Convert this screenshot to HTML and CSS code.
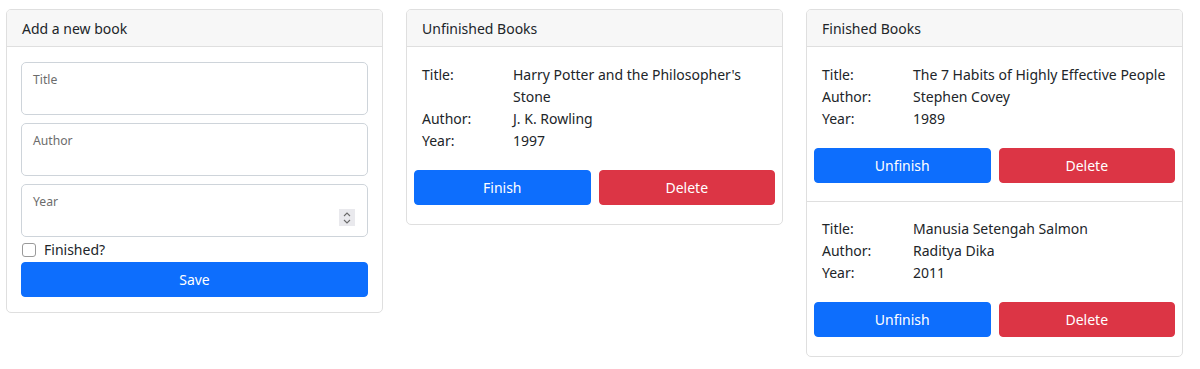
FILE: index.html
```html
<!DOCTYPE html>
<html>
<head>
<meta charset="utf-8">
<link rel="stylesheet" href="styles.css">
</head>
<body>
<div class="layout">
  <section class="card">
    <div class="card-header">Add a new book</div>
    <div class="form-body">
      <div class="field"><span class="float-label">Title</span></div>
      <div class="field"><span class="float-label">Author</span></div>
      <div class="field"><span class="float-label">Year</span>
        <span class="spinner"><svg width="10" height="14" viewBox="0 0 10 14"><path d="M2 5 L5 2 L8 5" fill="none" stroke="#6b6b6b" stroke-width="1.1"/><path d="M2 9 L5 12 L8 9" fill="none" stroke="#6b6b6b" stroke-width="1.1"/></svg></span>
      </div>
      <label class="check-row"><span class="checkbox"></span><span>Finished?</span></label>
      <button class="btn btn-primary btn-wide">Save</button>
    </div>
  </section>

  <section class="card">
    <div class="card-header">Unfinished Books</div>
    <div class="book">
      <dl class="info">
        <dt>Title:</dt><dd>Harry Potter and the Philosopher's Stone</dd>
        <dt>Author:</dt><dd>J. K. Rowling</dd>
        <dt>Year:</dt><dd>1997</dd>
      </dl>
      <div class="actions">
        <button class="btn btn-primary">Finish</button>
        <button class="btn btn-danger">Delete</button>
      </div>
    </div>
  </section>

  <section class="card">
    <div class="card-header">Finished Books</div>
    <div class="book">
      <dl class="info">
        <dt>Title:</dt><dd>The 7 Habits of Highly Effective People</dd>
        <dt>Author:</dt><dd>Stephen Covey</dd>
        <dt>Year:</dt><dd>1989</dd>
      </dl>
      <div class="actions">
        <button class="btn btn-primary">Unfinish</button>
        <button class="btn btn-danger">Delete</button>
      </div>
    </div>
    <div class="book">
      <dl class="info">
        <dt>Title:</dt><dd>Manusia Setengah Salmon</dd>
        <dt>Author:</dt><dd>Raditya Dika</dd>
        <dt>Year:</dt><dd>2011</dd>
      </dl>
      <div class="actions">
        <button class="btn btn-primary">Unfinish</button>
        <button class="btn btn-danger">Delete</button>
      </div>
    </div>
  </section>
</div>
</body>
</html>
```
FILE: styles.css
```css
* { box-sizing: border-box; }
html, body { margin: 0; background: #fff; }
body {
  font-family: "Noto Sans", "Open Sans", sans-serif;
  font-size: 14px;
  color: #212529;
  padding: 9px 0 0 6px;
}
.layout {
  display: flex;
  align-items: flex-start;
  gap: 23px;
}
.card {
  width: 377px;
  border: 1px solid #dfdfdf;
  border-radius: 5px;
  background: #fff;
  overflow: hidden;
}
.card-header {
  height: 37px;
  padding: 0 15px;
  display: flex;
  align-items: center;
  background: #f7f7f7;
  border-bottom: 1px solid #dfdfdf;
  font-size: 14px;
}
.form-body {
  padding: 15px 14px 15px 14px;
  display: flex;
  flex-direction: column;
}
.field {
  position: relative;
  height: 53px;
  border: 1px solid #ced4da;
  border-radius: 5px;
  margin-bottom: 8px;
  padding: 9px 11px;
}
.field:nth-child(3) { margin-bottom: 4px; }
.float-label {
  font-size: 12.2px;
  color: #6c6c6c;
  line-height: 16px;
  display: block;
}
.spinner {
  position: absolute;
  right: 12px;
  top: 24px;
  width: 16px;
  height: 17px;
  background: #e9e9ed;
  display: flex;
  align-items: center;
  justify-content: center;
}
.check-row {
  display: flex;
  align-items: center;
  gap: 8px;
  height: 17px;
  margin-left: 1px;
  margin-bottom: 4px;
}
.checkbox {
  width: 14px;
  height: 14px;
  border: 1px solid #9a9a9a;
  border-radius: 3px;
  background: #fff;
}
.btn {
  font-family: inherit;
  font-size: 14px;
  color: #fff;
  border: 1px solid transparent;
  border-radius: 4px;
  height: 35px;
  padding: 0;
  cursor: pointer;
}
.btn-primary { background: #0d6efd; border-color: #0d6efd; }
.btn-danger { background: #dc3545; border-color: #dc3545; }
.btn-wide { width: 100%; }
.book {
  padding: 17px 7px 18px 7px;
}
.book:last-child { padding-bottom: 19px; }
.book + .book { border-top: 1px solid #dfdfdf; padding-top: 16px; }
.info {
  display: grid;
  grid-template-columns: 91px 1fr;
  margin: 0 8px 18px 8px;
  line-height: 22px;
}
.info dt, .info dd { margin: 0; }
.actions {
  display: grid;
  grid-template-columns: 1fr 1fr;
  gap: 8px;
}
```
